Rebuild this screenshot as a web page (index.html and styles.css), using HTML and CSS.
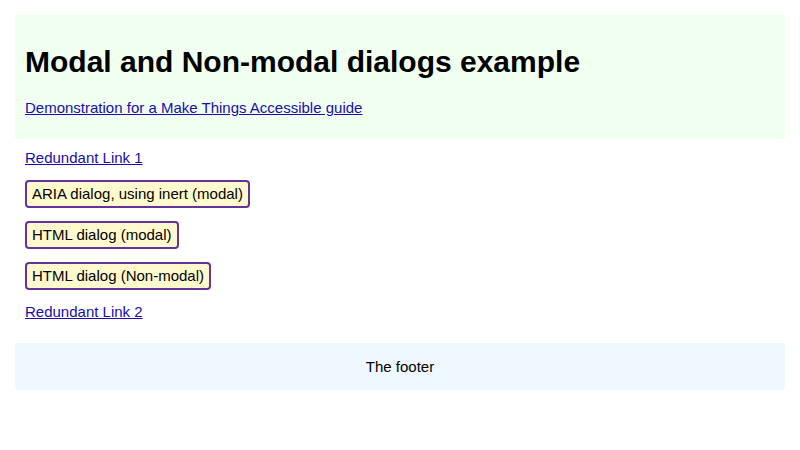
FILE: index.html
```html
<!DOCTYPE html>
<html>
  <head>
    <title>Modal and Non-modal dialogs example</title>
    <link rel="stylesheet" href="styles.css">
  </head>
  <body>
    <header id="header">
      <h1>Modal and Non-modal dialogs example</h1>
      <p><a href="#">Demonstration for a Make Things Accessible guide</a></p>
    </header>
    <main id="content">
      <a href="#">Redundant Link 1</a>
      <button type="button" class="open-btn">ARIA dialog, using inert (modal)</button>
      <button type="button" class="open-btn">HTML dialog (modal)</button>
      <button type="button" class="open-btn">HTML dialog (Non-modal)</button>
      <a href="#">Redundant Link 2</a>
    </main>
    <footer id="footer">
      <p>The footer</p>
    </footer>
  </body>
</html>
```

FILE: styles.css
```css
  /* Page basics */
  body {
    margin: 15px;
    font-family: "Liberation Sans", Arial, sans-serif;
    font-size: 15px;
    line-height: 18px;
    color: #000;
  }

  a {
    color: #1a0dab;
  }

  /* Header block */
  #header {
    background-color: #f0fff0;
    padding: 29px 10px 22px;
  }

  #header h1 {
    margin: 0 0 19px;
    font-size: 30px;
    line-height: 36px;
  }

  #header p {
    margin: 0;
  }

  /* Links and dialog buttons */
  #content {
    display: flex;
    flex-direction: column;
    align-items: flex-start;
    gap: 13px;
    padding: 10px 10px 22px;
  }

  .open-btn {
    font-family: inherit;
    font-size: 15px;
    line-height: 18px;
    color: #000;
    background-color: #fffacd;
    border: 2px solid #663399;
    border-radius: 4px;
    padding: 3px 5px;
    cursor: pointer;
  }

  /* Footer */
  #footer {
    background-color: #f0f8ff;
    text-align: center;
    padding: 15px 10px 14px;
  }

  #footer p {
    margin: 0;
  }
```
